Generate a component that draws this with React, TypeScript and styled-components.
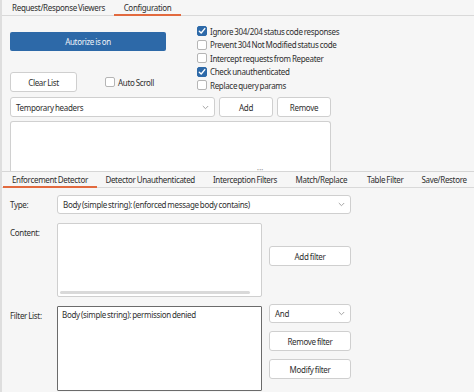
import React from 'react';
import styled, { createGlobalStyle } from 'styled-components';

const GlobalStyle = createGlobalStyle`
  html, body { margin: 0; padding: 0; background: #f6f6f6; }
  * { box-sizing: border-box; }
`;

const Window = styled.div`
  width: 474px;
  height: 392px;
  overflow: hidden;
  background: #f6f6f6;
  border-left: 2px solid #dedede;
  font-family: "Noto Sans", "Open Sans", sans-serif;
  font-size: 8px;
  letter-spacing: -0.32px;
  word-spacing: -0.6px;
  color: #2f2f2f;
`;

const TabBar = styled.div<{ $h: number; $pad: number }>`
  display: flex;
  height: ${({ $h }) => $h}px;
  border-bottom: 1px solid #d9d9d9;
  padding-left: ${({ $pad }) => $pad}px;
`;

const Tab = styled.div<{ $active?: boolean; $w: number }>`
  width: ${({ $w }) => $w}px;
  display: flex;
  align-items: center;
  justify-content: center;
  white-space: nowrap;
  border-bottom: 2px solid ${({ $active }) => ($active ? '#e26a3f' : 'transparent')};
  margin-bottom: -1px;
`;

const ConfigPanel = styled.div`
  padding: 0 0 0 8px;
  height: 155px;
  display: flex;
  flex-direction: column;
`;

const TopSection = styled.div`
  display: flex;
  height: 78px;
`;

const LeftColumn = styled.div`
  width: 187px;
  display: flex;
  flex-direction: column;
  padding-top: 16px;
`;

const PrimaryButton = styled.div`
  width: 156px;
  height: 19px;
  background: #2d69a8;
  border-radius: 2px;
  color: #eef3f9;
  display: flex;
  align-items: center;
  justify-content: center;
`;

const ClearRow = styled.div`
  display: flex;
  align-items: center;
  margin-top: 21px;
  gap: 28px;
`;

const Button = styled.div<{ $w: number; $h?: number }>`
  width: ${({ $w }) => $w}px;
  height: ${({ $h }) => $h ?? 20}px;
  background: #ffffff;
  border: 1px solid #cfcfcf;
  border-radius: 3px;
  display: flex;
  align-items: center;
  justify-content: center;
  flex-shrink: 0;
`;

const CheckList = styled.div`
  display: flex;
  flex-direction: column;
  padding-top: 10px;
  gap: 3.5px;
`;

const CheckRow = styled.label`
  display: flex;
  align-items: center;
  gap: 3px;
  height: 10px;
  white-space: nowrap;
`;

const Box = styled.span<{ $on?: boolean }>`
  width: 10px;
  height: 10px;
  border-radius: 2px;
  border: 1px solid ${({ $on }) => ($on ? '#2d69a8' : '#b5b5b5')};
  background: ${({ $on }) => ($on ? '#2d69a8' : '#ffffff')};
  display: flex;
  align-items: center;
  justify-content: center;
  flex-shrink: 0;
`;

const Check = ({ on, label }: { on?: boolean; label: string }) => (
  <CheckRow>
    <Box $on={on}>
      {on && (
        <svg width="8" height="8" viewBox="0 0 8 8">
          <path d="M1.3 4.2 L3.2 6 L6.8 1.6" stroke="#fff" strokeWidth="1.4" fill="none" strokeLinecap="round" strokeLinejoin="round" />
        </svg>
      )}
    </Box>
    {label}
  </CheckRow>
);

const HeaderRow = styled.div`
  display: flex;
  gap: 4px;
  margin-top: 3px;
`;

const Select = styled.div<{ $w: number; $h?: number }>`
  width: ${({ $w }) => $w}px;
  height: ${({ $h }) => $h ?? 20}px;
  background: #ffffff;
  border: 1px solid #cfcfcf;
  border-radius: 3px;
  display: flex;
  align-items: center;
  justify-content: space-between;
  padding: 0 5px 0 5px;
  white-space: nowrap;
  flex-shrink: 0;
`;

const Chevron = () => (
  <svg width="7" height="5" viewBox="0 0 7 5">
    <path d="M0.8 1 L3.5 3.7 L6.2 1" stroke="#9a9a9a" strokeWidth="0.9" fill="none" />
  </svg>
);

const ListArea = styled.div`
  width: 321px;
  flex: 1;
  margin-top: 4px;
  background: #ffffff;
  border: 1px solid #d0d0d0;
  border-bottom: none;
  border-radius: 3px 3px 0 0;
`;

const Splitter = styled.div`
  height: 1px;
  background: #d6d6d6;
  position: relative;
`;

const Grip = styled.span`
  position: absolute;
  left: 255px;
  top: -3px;
  font-size: 5px;
  line-height: 4px;
  color: #a0a0a0;
  letter-spacing: 0.3px;
`;

const DetectorPanel = styled.div`
  display: grid;
  grid-template-columns: 47px 205px 7px 82px;
  grid-template-rows: 19px 74px 85px;
  row-gap: 9px;
  padding: 7px 0 0 8px;
`;

const Label = styled.div`
  padding-top: 4px;
`;

const TypeLabel = styled.div`
  display: flex;
  align-items: center;
`;

const TextBox = styled.div<{ $dark?: boolean }>`
  background: #ffffff;
  border: 1px solid ${({ $dark }) => ($dark ? '#6b6b6b' : '#cfcfcf')};
  border-radius: ${({ $dark }) => ($dark ? '1px' : '2px')};
  position: relative;
  padding: 2px 4px;
`;

const HScroll = styled.div`
  position: absolute;
  left: 2px;
  right: 11px;
  bottom: 2px;
  height: 3px;
  border-radius: 2px;
  background: #d9d9d9;
`;

const ButtonStack = styled.div`
  display: flex;
  flex-direction: column;
  gap: 8px;
  margin-top: -2px;
`;

const CenterCell = styled.div`
  display: flex;
  align-items: center;
  padding-bottom: 8px;
`;

const topTabs = [
  { label: 'Request/Response Viewers', w: 111 },
  { label: 'Configuration', w: 67, active: true },
];

const bottomTabs = [
  { label: 'Enforcement Detector', w: 94, active: true },
  { label: 'Detector Unauthenticated', w: 107 },
  { label: 'Interception Filters', w: 83 },
  { label: 'Match/Replace', w: 70 },
  { label: 'Table Filter', w: 58 },
  { label: 'Save/Restore', w: 60 },
];

export default function App() {
  return (
    <>
      <GlobalStyle />
      <Window>
        <TabBar $h={16} $pad={1}>
          {topTabs.map((t) => (
            <Tab key={t.label} $w={t.w} $active={t.active}>{t.label}</Tab>
          ))}
        </TabBar>
        <ConfigPanel>
          <TopSection>
            <LeftColumn>
              <PrimaryButton>Autorize is on</PrimaryButton>
              <ClearRow>
                <Button $w={67}>Clear List</Button>
                <Check label="Auto Scroll" />
              </ClearRow>
            </LeftColumn>
            <CheckList>
              <Check on label="Ignore 304/204 status code responses" />
              <Check label="Prevent 304 Not Modified status code" />
              <Check label="Intercept requests from Repeater" />
              <Check on label="Check unauthenticated" />
              <Check label="Replace query params" />
            </CheckList>
          </TopSection>
          <HeaderRow>
            <Select $w={205}>Temporary headers<Chevron /></Select>
            <Button $w={54}>Add</Button>
            <Button $w={54}>Remove</Button>
          </HeaderRow>
          <ListArea />
        </ConfigPanel>
        <Splitter><Grip>•••</Grip></Splitter>
        <TabBar $h={16} $pad={1}>
          {bottomTabs.map((t) => (
            <Tab key={t.label} $w={t.w} $active={t.active}>{t.label}</Tab>
          ))}
        </TabBar>
        <DetectorPanel>
          <TypeLabel>Type:</TypeLabel>
          <Select $w={294} $h={19} style={{ gridColumn: '2 / 5' }}>
            Body (simple string): (enforced message body contains)<Chevron />
          </Select>
          <Label>Content:</Label>
          <TextBox><HScroll /></TextBox>
          <span />
          <CenterCell><Button $w={82}>Add filter</Button></CenterCell>
          <Label>Filter List:</Label>
          <TextBox $dark>Body (simple string): permission denied</TextBox>
          <span />
          <ButtonStack>
            <Select $w={82} $h={19}>And<Chevron /></Select>
            <Button $w={82}>Remove filter</Button>
            <Button $w={82}>Modify filter</Button>
          </ButtonStack>
        </DetectorPanel>
      </Window>
    </>
  );
}
